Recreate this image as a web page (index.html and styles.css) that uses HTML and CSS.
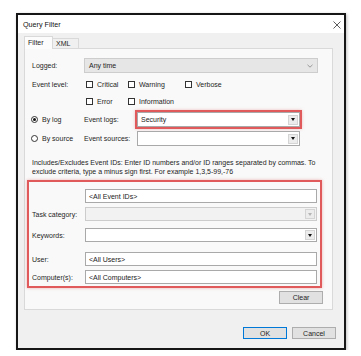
FILE: index.html
```html
<!DOCTYPE html>
<html lang="en">

<head>
  <meta charset="UTF-8" />
  <meta name="viewport" content="width=device-width, initial-scale=1.0" />
  <title>Query Filter</title>
  <link rel="stylesheet" href="styles.css">
</head>

<body>
  <div class="dialog">
    <div class="titlebar">
      <span>Query Filter</span>
      <svg class="close" width="8" height="8" viewBox="0 0 8 8">
        <path d="M0.5 0.5 L7.5 7.5 M7.5 0.5 L0.5 7.5" stroke="#333" stroke-width="0.8" fill="none" />
      </svg>
    </div>

    <div class="dlg-body">
      <div class="tabs">
        <div class="tab active">Filter</div>
        <div class="tab">XML</div>
      </div>

      <div class="panel">
        <div class="row logged">
          <span class="label">Logged:</span>
          <div class="select">
            <span>Any time</span>
            <svg class="chev" width="6" height="4" viewBox="0 0 6 4">
              <path d="M0.5 0.8 L3 3.2 L5.5 0.8" stroke="#777" stroke-width="0.7" fill="none" />
            </svg>
          </div>
        </div>

        <div class="levels">
          <span class="label">Event level:</span>
          <label class="check"><span class="box"></span>Critical</label>
          <label class="check"><span class="box"></span>Warning</label>
          <label class="check"><span class="box"></span>Verbose</label>
          <span></span>
          <label class="check"><span class="box"></span>Error</label>
          <label class="check wide"><span class="box"></span>Information</label>
        </div>

        <div class="row source">
          <label class="radio-opt"><span class="radio on"></span>By log</label>
          <span class="label sub">Event logs:</span>
          <div class="field combo highlight">
            <span>Security</span>
            <span class="drop"><i class="tri"></i></span>
          </div>
        </div>

        <div class="row source">
          <label class="radio-opt"><span class="radio"></span>By source</label>
          <span class="label sub">Event sources:</span>
          <div class="field combo">
            <span></span>
            <span class="drop"><i class="tri"></i></span>
          </div>
        </div>

        <p class="hint">Includes/Excludes Event IDs: Enter ID numbers and/or ID ranges separated by commas. To<br>exclude criteria, type a minus sign first. For example 1,3,5-99,-76</p>

        <div class="redbox">
          <div class="frow first">
            <span class="label"></span>
            <div class="field wide-field"><span>&lt;All Event IDs&gt;</span></div>
          </div>
          <div class="frow gap4">
            <span class="label">Task category:</span>
            <div class="field wide-field disabled">
              <span></span>
              <span class="drop off"><i class="tri"></i></span>
            </div>
          </div>
          <div class="frow gap7">
            <span class="label">Keywords:</span>
            <div class="field wide-field">
              <span></span>
              <span class="drop"><i class="tri"></i></span>
            </div>
          </div>
          <div class="frow gap10">
            <span class="label">User:</span>
            <div class="field wide-field"><span>&lt;All Users&gt;</span></div>
          </div>
          <div class="frow gap4">
            <span class="label">Computer(s):</span>
            <div class="field wide-field"><span>&lt;All Computers&gt;</span></div>
          </div>
        </div>

        <div class="clear-row">
          <button class="btn">Clear</button>
        </div>
      </div>

      <div class="footer">
        <button class="btn default">OK</button>
        <button class="btn">Cancel</button>
      </div>
    </div>
  </div>
</body>

</html>
```

FILE: styles.css
```css
* {
  box-sizing: border-box;
}

body {
  margin: 0;
  padding: 13px 0 0 16px;
  background: #fff;
  font-family: 'Liberation Sans', Arial, sans-serif;
  font-size: 7px;
  color: #1e1e1e;
}

.dialog {
  width: 330px;
  height: 337px;
  border: 2px solid #161616;
  background: #f0f0f0;
  box-shadow: 1px 1px 3px rgba(0, 0, 0, 0.25);
  display: flex;
  flex-direction: column;
  overflow: hidden;
}

.titlebar {
  height: 18px;
  background: #fff;
  display: flex;
  align-items: center;
  justify-content: space-between;
  padding: 1px 3px 0 5px;
  font-size: 7.2px;
  color: #111;
}

.dlg-body {
  flex: 1;
  padding: 0 11px 0 6px;
}

.tabs {
  height: 15px;
  display: flex;
  align-items: flex-end;
}

.tab {
  height: 10px;
  width: 26px;
  padding: 1px 0 0 3px;
  border: 1px solid #d9d9d9;
  border-bottom: none;
  border-left: none;
  background: #f0f0f0;
  line-height: 8px;
}

.tab.active {
  position: relative;
  z-index: 1;
  width: 29px;
  height: 13px;
  margin-bottom: -1px;
  padding-top: 2px;
  border-left: 1px solid #d9d9d9;
  background: #fcfcfc;
}

.panel {
  height: 262px;
  border: 1px solid #d9d9d9;
  background: #f9f9f9;
  padding-left: 7px;
}

.row {
  display: flex;
  align-items: center;
}

.label {
  flex: none;
  width: 52px;
  white-space: nowrap;
}

.logged {
  margin-top: 9px;
  height: 15px;
}

.select {
  width: 234px;
  height: 15px;
  background: #e6e6e6;
  border: 1px solid #cdcdcd;
  display: flex;
  align-items: center;
  justify-content: space-between;
  padding: 0 4px 0 4px;
}

.levels {
  margin-top: 3px;
  display: grid;
  grid-template-columns: 54px 42px 57px auto;
  grid-auto-rows: 17px;
  align-items: center;
}

.check {
  display: flex;
  align-items: center;
  gap: 4px;
  white-space: nowrap;
}

.box {
  width: 7px;
  height: 7px;
  border: 1px solid #333;
  background: #fff;
}

.source {
  height: 19px;
}

.radio-opt {
  flex: none;
  width: 53px;
  margin-left: -1px;
  display: flex;
  align-items: center;
  gap: 4px;
  white-space: nowrap;
}

.radio {
  width: 7px;
  height: 7px;
  border: 1px solid #333;
  border-radius: 50%;
  background: #fff;
  display: flex;
  align-items: center;
  justify-content: center;
}

.radio.on::after {
  content: "";
  width: 3px;
  height: 3px;
  border-radius: 50%;
  background: #111;
}

.label.sub {
  width: 53px;
}

.field {
  height: 15px;
  background: #fff;
  border: 1px solid #a9a9a9;
  display: flex;
  align-items: center;
  justify-content: space-between;
  padding: 0 1px 0 3px;
  color: #222;
  white-space: nowrap;
}

.combo {
  width: 163px;
}

.highlight {
  box-shadow: 0 0 0 2px #e0595b, 0 0 3px 2px rgba(224, 89, 91, 0.35);
}

.drop {
  width: 10px;
  height: 10px;
  background: #ececec;
  border: 1px solid #d4d4d4;
  display: flex;
  align-items: center;
  justify-content: center;
}

.tri {
  width: 0;
  height: 0;
  border-left: 2.5px solid transparent;
  border-right: 2.5px solid transparent;
  border-top: 3px solid #111;
}

.drop.off .tri {
  border-top-color: #b5b5b5;
}

.hint {
  margin: 10px 0 0 0;
  line-height: 9px;
  white-space: nowrap;
}

.redbox {
  margin: 4px 0 0 -5px;
  width: 295px;
  height: 108px;
  border: 2px solid #e0595b;
  box-shadow: 0 0 3px rgba(224, 89, 91, 0.45);
  padding: 7px 3px 2px 3px;
}

.frow {
  display: flex;
  align-items: center;
  height: 14px;
}

.frow .label {
  width: 53px;
}

.gap4 {
  margin-top: 4px;
}

.gap7 {
  margin-top: 7px;
}

.gap10 {
  margin-top: 10px;
}

.wide-field {
  width: 232px;
  height: 14px;
}

.field.disabled {
  background: #f2f2f2;
  border-color: #cccccc;
}

.clear-row {
  margin-top: 3px;
  display: flex;
  justify-content: flex-end;
  padding-right: 9px;
}

.btn {
  width: 44px;
  height: 13px;
  padding: 0;
  background: #e1e1e1;
  border: 1px solid #adadad;
  font-family: 'Liberation Sans', Arial, sans-serif;
  font-size: 7px;
  color: #1e1e1e;
}

.footer {
  margin: 17px -3px 0 0;
  display: flex;
  justify-content: flex-end;
  gap: 5px;
}

.footer .btn {
  height: 12px;
}

.btn.default {
  border-color: #0078d7;
}
```
